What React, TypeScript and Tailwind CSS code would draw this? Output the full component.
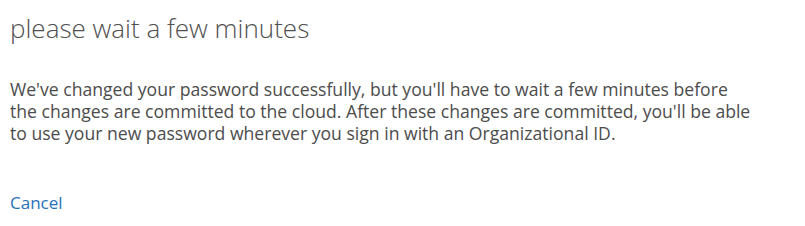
import React from 'react';

export default function App() {
  return (
    <div className="min-h-screen bg-white px-[10px] pt-[12px] font-['Segoe_UI','Open_Sans',sans-serif] text-[#4c4c4c]">
      <h1 className="text-[26px] font-light leading-[32px] text-[#505050]">please wait a few minutes</h1>

      <p className="mt-[34px] whitespace-nowrap text-[17.6px] leading-[22px]">
        We've changed your password successfully, but you'll have to wait a few minutes before
        <br />
        the changes are committed to the cloud. After these changes are committed, you'll be able
        <br />
        to use your new password wherever you sign in with an Organizational ID.
      </p>

      <div className="mt-[47px]">
        <a href="#" className="text-[17px] leading-[22px] text-[#2672b8]">Cancel</a>
      </div>
    </div>
  );
}
